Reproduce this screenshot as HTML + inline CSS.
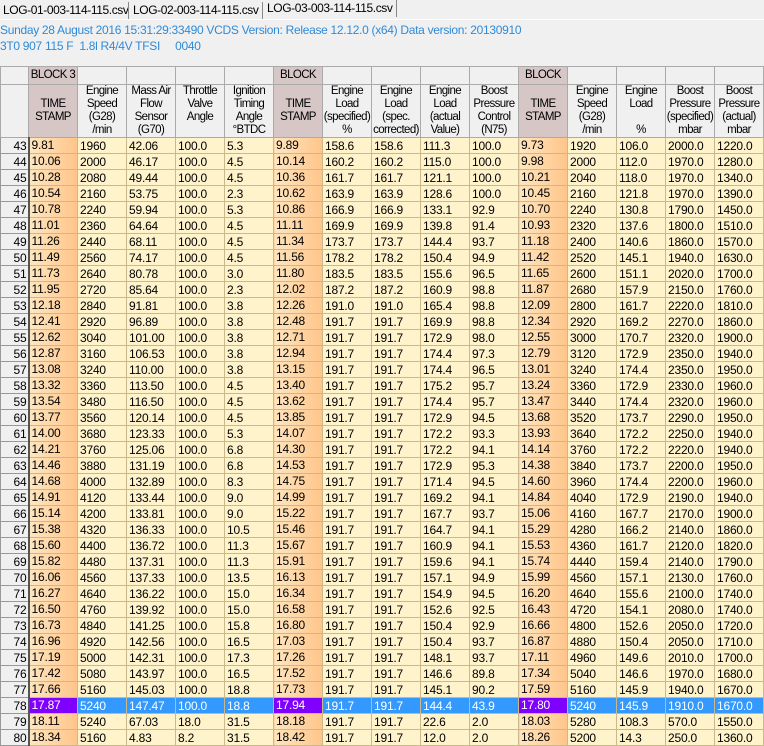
<!DOCTYPE html>
<html><head><meta charset="utf-8">
<style>
*{margin:0;padding:0;box-sizing:border-box}
body{width:764px;height:746px;overflow:hidden;background:#f0f0f0;font-family:"Liberation Sans",Arial,sans-serif;font-size:12px;color:#000;position:relative}
.tab{position:absolute;top:2px;height:17px;line-height:16px;padding-left:3px;border-right:1px solid #888;font-size:12px;letter-spacing:-0.4px;white-space:nowrap;overflow:hidden}
.tabline{position:absolute;top:19px;left:0;width:764px;height:1px;background:#fff}
.info{position:absolute;left:0;color:#2f8ad8;font-size:12px;letter-spacing:-0.3px;white-space:nowrap}
table{position:absolute;left:0;top:66px;border-collapse:collapse;table-layout:fixed;width:764px;border-top:1px solid #777}
td{border:1px solid #c9b98c;height:16px;line-height:14px;overflow:hidden;white-space:nowrap;padding:0 0 0 2px;background:#fff3cc;vertical-align:bottom;font-size:12px;letter-spacing:-0.2px}
td.n{background:#f0f0f0;text-align:right;padding:0 1px 0 0;border:1px solid #999;border-right:2px solid #555}
td.t{background:linear-gradient(to right,#ffe6bf,#ffc58a);vertical-align:top}
thead td{background:#f0f0f0;border:1px solid #aaa;text-align:center;vertical-align:middle;padding:0;line-height:13px;letter-spacing:-0.6px;font-size:11.5px}
thead td.t{background:#d6c6c6;border-color:#aaa;vertical-align:middle}
tr.h1 td{height:18px}
tr.h2 td{height:52px}
tr.sel td{background:#3399ff;color:#fff}
tr.sel td.t{background:#8000ff;color:#fff}
tr.sel td.n{background:#f0f0f0;color:#000}
</style></head><body>
<div class="tab" style="left:0;width:129px">LOG-01-003-114-115.csv</div>
<div class="tab" style="left:130px;width:133px">LOG-02-003-114-115.csv</div>
<div class="tab" style="left:264px;width:133px;top:0;background:#f0f0f0">LOG-03-003-114-115.csv</div>
<div class="tabline"></div>
<div class="info" style="top:23px">Sunday 28 August 2016 15:31:29:33490 VCDS Version: Release 12.12.0 (x64) Data version: 20130910</div>
<div class="info" style="top:39px">3T0 907 115 F&nbsp; 1.8l R4/4V TFSI &nbsp;&nbsp;&nbsp; 0040</div>
<table>
<colgroup><col style="width:28px"><col span="15" style="width:49px"></colgroup>
<thead>
<tr class="h1"><td></td><td class="t">BLOCK 3</td><td></td><td></td><td></td><td></td><td class="t">BLOCK</td><td></td><td></td><td></td><td></td><td class="t">BLOCK</td><td></td><td></td><td></td><td></td></tr>
<tr class="h2"><td></td><td class="t">TIME<br>STAMP</td><td>Engine<br>Speed<br>(G28)<br>/min</td><td>Mass Air<br>Flow<br>Sensor<br>(G70)</td><td>Throttle<br>Valve<br>Angle<br>&nbsp;</td><td>Ignition<br>Timing<br>Angle<br>°BTDC</td><td class="t">TIME<br>STAMP</td><td>Engine<br>Load<br>(specified)<br>%</td><td>Engine<br>Load<br>(spec.<br>corrected)</td><td>Engine<br>Load<br>(actual<br>Value)</td><td>Boost<br>Pressure<br>Control<br>(N75)</td><td class="t">TIME<br>STAMP</td><td>Engine<br>Speed<br>(G28)<br>/min</td><td>Engine<br>Load<br><br>%</td><td>Boost<br>Pressure<br>(specified)<br>mbar</td><td>Boost<br>Pressure<br>(actual)<br>mbar</td></tr>
</thead>
<tbody>
<tr><td class="n">43</td><td class="t">9.81</td><td>1960</td><td>42.06</td><td>100.0</td><td>5.3</td><td class="t">9.89</td><td>158.6</td><td>158.6</td><td>111.3</td><td>100.0</td><td class="t">9.73</td><td>1920</td><td>106.0</td><td>2000.0</td><td>1220.0</td></tr>
<tr><td class="n">44</td><td class="t">10.06</td><td>2000</td><td>46.17</td><td>100.0</td><td>4.5</td><td class="t">10.14</td><td>160.2</td><td>160.2</td><td>115.0</td><td>100.0</td><td class="t">9.98</td><td>2000</td><td>112.0</td><td>1970.0</td><td>1280.0</td></tr>
<tr><td class="n">45</td><td class="t">10.28</td><td>2080</td><td>49.44</td><td>100.0</td><td>4.5</td><td class="t">10.36</td><td>161.7</td><td>161.7</td><td>121.1</td><td>100.0</td><td class="t">10.21</td><td>2040</td><td>118.0</td><td>1970.0</td><td>1340.0</td></tr>
<tr><td class="n">46</td><td class="t">10.54</td><td>2160</td><td>53.75</td><td>100.0</td><td>2.3</td><td class="t">10.62</td><td>163.9</td><td>163.9</td><td>128.6</td><td>100.0</td><td class="t">10.45</td><td>2160</td><td>121.8</td><td>1970.0</td><td>1390.0</td></tr>
<tr><td class="n">47</td><td class="t">10.78</td><td>2240</td><td>59.94</td><td>100.0</td><td>5.3</td><td class="t">10.86</td><td>166.9</td><td>166.9</td><td>133.1</td><td>92.9</td><td class="t">10.70</td><td>2240</td><td>130.8</td><td>1790.0</td><td>1450.0</td></tr>
<tr><td class="n">48</td><td class="t">11.01</td><td>2360</td><td>64.64</td><td>100.0</td><td>4.5</td><td class="t">11.11</td><td>169.9</td><td>169.9</td><td>139.8</td><td>91.4</td><td class="t">10.93</td><td>2320</td><td>137.6</td><td>1800.0</td><td>1510.0</td></tr>
<tr><td class="n">49</td><td class="t">11.26</td><td>2440</td><td>68.11</td><td>100.0</td><td>4.5</td><td class="t">11.34</td><td>173.7</td><td>173.7</td><td>144.4</td><td>93.7</td><td class="t">11.18</td><td>2400</td><td>140.6</td><td>1860.0</td><td>1570.0</td></tr>
<tr><td class="n">50</td><td class="t">11.49</td><td>2560</td><td>74.17</td><td>100.0</td><td>4.5</td><td class="t">11.56</td><td>178.2</td><td>178.2</td><td>150.4</td><td>94.9</td><td class="t">11.42</td><td>2520</td><td>145.1</td><td>1940.0</td><td>1630.0</td></tr>
<tr><td class="n">51</td><td class="t">11.73</td><td>2640</td><td>80.78</td><td>100.0</td><td>3.0</td><td class="t">11.80</td><td>183.5</td><td>183.5</td><td>155.6</td><td>96.5</td><td class="t">11.65</td><td>2600</td><td>151.1</td><td>2020.0</td><td>1700.0</td></tr>
<tr><td class="n">52</td><td class="t">11.95</td><td>2720</td><td>85.64</td><td>100.0</td><td>2.3</td><td class="t">12.02</td><td>187.2</td><td>187.2</td><td>160.9</td><td>98.8</td><td class="t">11.87</td><td>2680</td><td>157.9</td><td>2150.0</td><td>1760.0</td></tr>
<tr><td class="n">53</td><td class="t">12.18</td><td>2840</td><td>91.81</td><td>100.0</td><td>3.8</td><td class="t">12.26</td><td>191.0</td><td>191.0</td><td>165.4</td><td>98.8</td><td class="t">12.09</td><td>2800</td><td>161.7</td><td>2220.0</td><td>1810.0</td></tr>
<tr><td class="n">54</td><td class="t">12.41</td><td>2920</td><td>96.89</td><td>100.0</td><td>3.8</td><td class="t">12.48</td><td>191.7</td><td>191.7</td><td>169.9</td><td>98.8</td><td class="t">12.34</td><td>2920</td><td>169.2</td><td>2270.0</td><td>1860.0</td></tr>
<tr><td class="n">55</td><td class="t">12.62</td><td>3040</td><td>101.00</td><td>100.0</td><td>3.8</td><td class="t">12.71</td><td>191.7</td><td>191.7</td><td>172.9</td><td>98.0</td><td class="t">12.55</td><td>3000</td><td>170.7</td><td>2320.0</td><td>1900.0</td></tr>
<tr><td class="n">56</td><td class="t">12.87</td><td>3160</td><td>106.53</td><td>100.0</td><td>3.8</td><td class="t">12.94</td><td>191.7</td><td>191.7</td><td>174.4</td><td>97.3</td><td class="t">12.79</td><td>3120</td><td>172.9</td><td>2350.0</td><td>1940.0</td></tr>
<tr><td class="n">57</td><td class="t">13.08</td><td>3240</td><td>110.00</td><td>100.0</td><td>3.8</td><td class="t">13.15</td><td>191.7</td><td>191.7</td><td>174.4</td><td>96.5</td><td class="t">13.01</td><td>3240</td><td>174.4</td><td>2350.0</td><td>1950.0</td></tr>
<tr><td class="n">58</td><td class="t">13.32</td><td>3360</td><td>113.50</td><td>100.0</td><td>4.5</td><td class="t">13.40</td><td>191.7</td><td>191.7</td><td>175.2</td><td>95.7</td><td class="t">13.24</td><td>3360</td><td>172.9</td><td>2330.0</td><td>1960.0</td></tr>
<tr><td class="n">59</td><td class="t">13.54</td><td>3480</td><td>116.50</td><td>100.0</td><td>4.5</td><td class="t">13.62</td><td>191.7</td><td>191.7</td><td>174.4</td><td>95.7</td><td class="t">13.47</td><td>3440</td><td>174.4</td><td>2320.0</td><td>1960.0</td></tr>
<tr><td class="n">60</td><td class="t">13.77</td><td>3560</td><td>120.14</td><td>100.0</td><td>4.5</td><td class="t">13.85</td><td>191.7</td><td>191.7</td><td>172.9</td><td>94.5</td><td class="t">13.68</td><td>3520</td><td>173.7</td><td>2290.0</td><td>1950.0</td></tr>
<tr><td class="n">61</td><td class="t">14.00</td><td>3680</td><td>123.33</td><td>100.0</td><td>5.3</td><td class="t">14.07</td><td>191.7</td><td>191.7</td><td>172.2</td><td>93.3</td><td class="t">13.93</td><td>3640</td><td>172.2</td><td>2250.0</td><td>1940.0</td></tr>
<tr><td class="n">62</td><td class="t">14.21</td><td>3760</td><td>125.06</td><td>100.0</td><td>6.8</td><td class="t">14.30</td><td>191.7</td><td>191.7</td><td>172.2</td><td>94.1</td><td class="t">14.14</td><td>3760</td><td>172.2</td><td>2220.0</td><td>1940.0</td></tr>
<tr><td class="n">63</td><td class="t">14.46</td><td>3880</td><td>131.19</td><td>100.0</td><td>6.8</td><td class="t">14.53</td><td>191.7</td><td>191.7</td><td>172.9</td><td>95.3</td><td class="t">14.38</td><td>3840</td><td>173.7</td><td>2200.0</td><td>1950.0</td></tr>
<tr><td class="n">64</td><td class="t">14.68</td><td>4000</td><td>132.89</td><td>100.0</td><td>8.3</td><td class="t">14.75</td><td>191.7</td><td>191.7</td><td>171.4</td><td>94.5</td><td class="t">14.60</td><td>3960</td><td>174.4</td><td>2200.0</td><td>1960.0</td></tr>
<tr><td class="n">65</td><td class="t">14.91</td><td>4120</td><td>133.44</td><td>100.0</td><td>9.0</td><td class="t">14.99</td><td>191.7</td><td>191.7</td><td>169.2</td><td>94.1</td><td class="t">14.84</td><td>4040</td><td>172.9</td><td>2190.0</td><td>1940.0</td></tr>
<tr><td class="n">66</td><td class="t">15.14</td><td>4200</td><td>133.81</td><td>100.0</td><td>9.0</td><td class="t">15.22</td><td>191.7</td><td>191.7</td><td>167.7</td><td>93.7</td><td class="t">15.06</td><td>4160</td><td>167.7</td><td>2170.0</td><td>1900.0</td></tr>
<tr><td class="n">67</td><td class="t">15.38</td><td>4320</td><td>136.33</td><td>100.0</td><td>10.5</td><td class="t">15.46</td><td>191.7</td><td>191.7</td><td>164.7</td><td>94.1</td><td class="t">15.29</td><td>4280</td><td>166.2</td><td>2140.0</td><td>1860.0</td></tr>
<tr><td class="n">68</td><td class="t">15.60</td><td>4400</td><td>136.72</td><td>100.0</td><td>11.3</td><td class="t">15.67</td><td>191.7</td><td>191.7</td><td>160.9</td><td>94.1</td><td class="t">15.53</td><td>4360</td><td>161.7</td><td>2120.0</td><td>1820.0</td></tr>
<tr><td class="n">69</td><td class="t">15.82</td><td>4480</td><td>137.31</td><td>100.0</td><td>11.3</td><td class="t">15.91</td><td>191.7</td><td>191.7</td><td>159.6</td><td>94.1</td><td class="t">15.74</td><td>4440</td><td>159.4</td><td>2140.0</td><td>1790.0</td></tr>
<tr><td class="n">70</td><td class="t">16.06</td><td>4560</td><td>137.33</td><td>100.0</td><td>13.5</td><td class="t">16.13</td><td>191.7</td><td>191.7</td><td>157.1</td><td>94.9</td><td class="t">15.99</td><td>4560</td><td>157.1</td><td>2130.0</td><td>1760.0</td></tr>
<tr><td class="n">71</td><td class="t">16.27</td><td>4640</td><td>136.22</td><td>100.0</td><td>15.0</td><td class="t">16.34</td><td>191.7</td><td>191.7</td><td>154.9</td><td>94.5</td><td class="t">16.20</td><td>4640</td><td>155.6</td><td>2100.0</td><td>1740.0</td></tr>
<tr><td class="n">72</td><td class="t">16.50</td><td>4760</td><td>139.92</td><td>100.0</td><td>15.0</td><td class="t">16.58</td><td>191.7</td><td>191.7</td><td>152.6</td><td>92.5</td><td class="t">16.43</td><td>4720</td><td>154.1</td><td>2080.0</td><td>1740.0</td></tr>
<tr><td class="n">73</td><td class="t">16.73</td><td>4840</td><td>141.25</td><td>100.0</td><td>15.8</td><td class="t">16.80</td><td>191.7</td><td>191.7</td><td>150.4</td><td>92.9</td><td class="t">16.66</td><td>4800</td><td>152.6</td><td>2050.0</td><td>1720.0</td></tr>
<tr><td class="n">74</td><td class="t">16.96</td><td>4920</td><td>142.56</td><td>100.0</td><td>16.5</td><td class="t">17.03</td><td>191.7</td><td>191.7</td><td>150.4</td><td>93.7</td><td class="t">16.87</td><td>4880</td><td>150.4</td><td>2050.0</td><td>1710.0</td></tr>
<tr><td class="n">75</td><td class="t">17.19</td><td>5000</td><td>142.31</td><td>100.0</td><td>17.3</td><td class="t">17.26</td><td>191.7</td><td>191.7</td><td>148.1</td><td>93.7</td><td class="t">17.11</td><td>4960</td><td>149.6</td><td>2010.0</td><td>1700.0</td></tr>
<tr><td class="n">76</td><td class="t">17.42</td><td>5080</td><td>143.97</td><td>100.0</td><td>16.5</td><td class="t">17.52</td><td>191.7</td><td>191.7</td><td>146.6</td><td>89.8</td><td class="t">17.34</td><td>5040</td><td>146.6</td><td>1970.0</td><td>1680.0</td></tr>
<tr><td class="n">77</td><td class="t">17.66</td><td>5160</td><td>145.03</td><td>100.0</td><td>18.8</td><td class="t">17.73</td><td>191.7</td><td>191.7</td><td>145.1</td><td>90.2</td><td class="t">17.59</td><td>5160</td><td>145.9</td><td>1940.0</td><td>1670.0</td></tr>
<tr class="sel"><td class="n">78</td><td class="t">17.87</td><td>5240</td><td>147.47</td><td>100.0</td><td>18.8</td><td class="t">17.94</td><td>191.7</td><td>191.7</td><td>144.4</td><td>43.9</td><td class="t">17.80</td><td>5240</td><td>145.9</td><td>1910.0</td><td>1670.0</td></tr>
<tr><td class="n">79</td><td class="t">18.11</td><td>5240</td><td>67.03</td><td>18.0</td><td>31.5</td><td class="t">18.18</td><td>191.7</td><td>191.7</td><td>22.6</td><td>2.0</td><td class="t">18.03</td><td>5280</td><td>108.3</td><td>570.0</td><td>1550.0</td></tr>
<tr><td class="n">80</td><td class="t">18.34</td><td>5160</td><td>4.83</td><td>8.2</td><td>31.5</td><td class="t">18.42</td><td>191.7</td><td>191.7</td><td>12.0</td><td>2.0</td><td class="t">18.26</td><td>5200</td><td>14.3</td><td>250.0</td><td>1360.0</td></tr>
</tbody>
</table>
</body></html>
